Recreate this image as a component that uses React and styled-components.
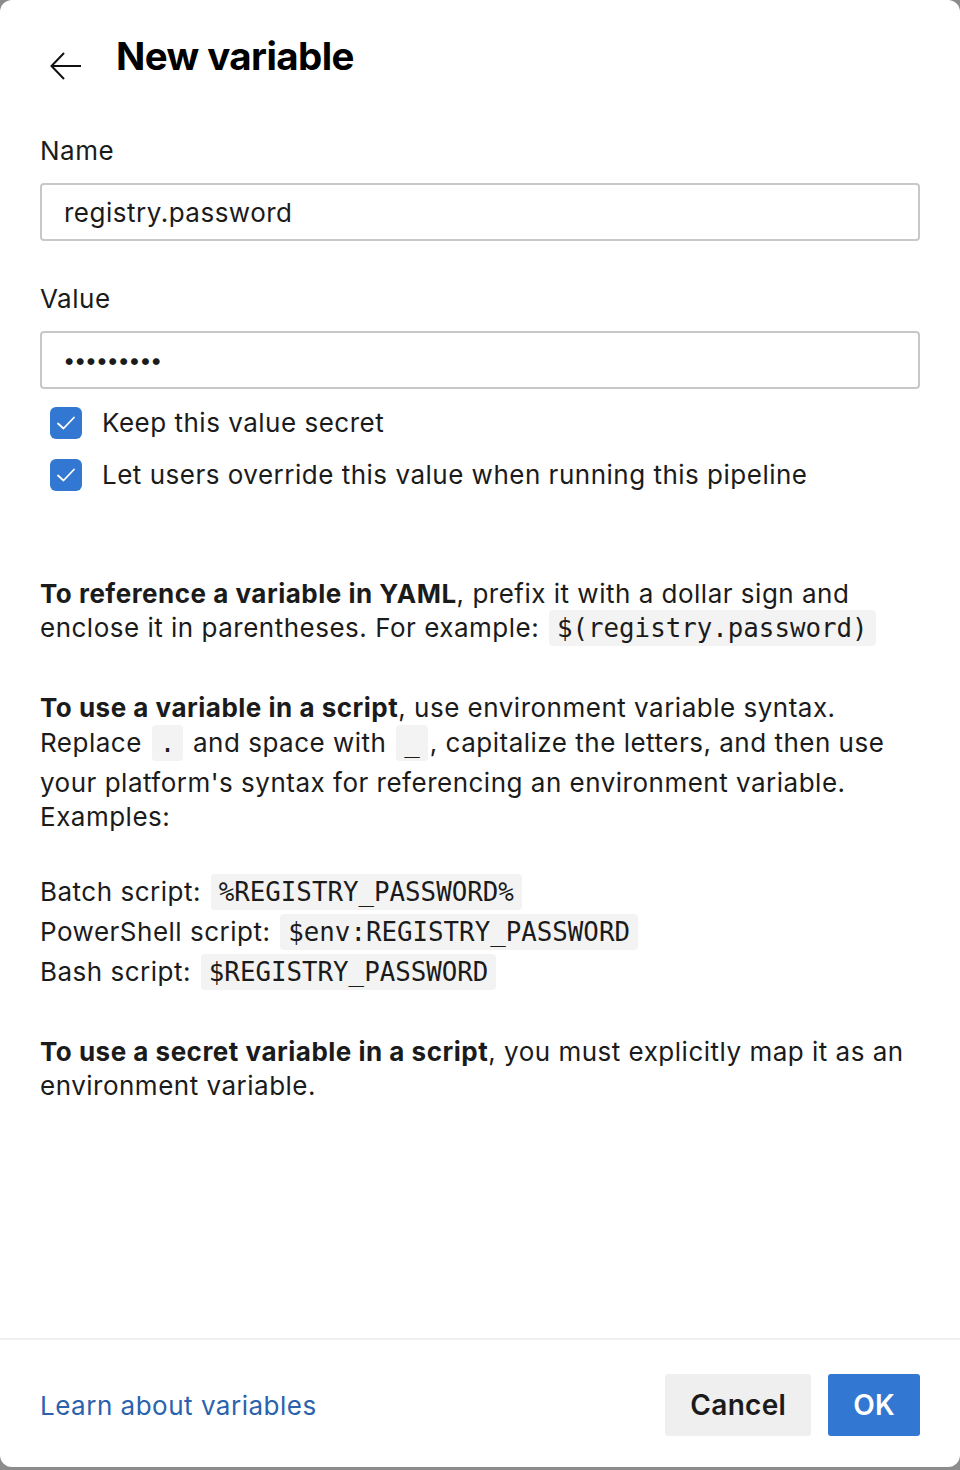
import React from "react";
import styled, { createGlobalStyle } from "styled-components";

const Global = createGlobalStyle`
  html, body { margin: 0; padding: 0; background: #8c8c8c; }
  body { font-family: Inter, "Open Sans", "Liberation Sans", sans-serif; color: #1b1b1b; letter-spacing: 0.5px; }
  * { box-sizing: border-box; }
`;

const Dialog = styled.div`
  width: 960px;
  height: 1467px;
  background: #fff;
  border-radius: 12px;
  display: flex;
  flex-direction: column;
  overflow: hidden;
`;

const Body = styled.div`
  flex: 1;
  padding: 0 40px;
  display: flex;
  flex-direction: column;
`;

const Header = styled.div`
  display: flex;
  align-items: center;
  gap: 34px;
  height: 116px;
  padding-left: 10px;
`;

const BackButton = styled.button`
  border: 0;
  background: none;
  padding: 0;
  width: 32px;
  height: 32px;
  display: flex;
  align-items: center;
  justify-content: center;
  margin-top: 16px;
  cursor: pointer;
`;

const Title = styled.h1`
  margin: 0 0 4px;
  font-size: 38.5px;
  font-weight: 700;
  letter-spacing: -0.6px;
  color: #000;
`;

const Label = styled.label`
  display: block;
  font-size: 26px;
  line-height: 34px;
  margin-top: ${(p) => p.$mt || 0}px;
  margin-bottom: 15px;
`;

const Input = styled.input`
  width: 100%;
  height: 58px;
  border: 2px solid #c8c8c8;
  border-radius: 4px;
  padding: 0 22px;
  font-family: inherit;
  font-size: 26px;
  letter-spacing: 0.5px;
  color: #1b1b1b;
  outline: none;
  background: #fff;
  ${(p) => p.type === "password" && "letter-spacing: -1.5px; font-size: 22px; padding-left: 21px;"}
`;

const Checks = styled.div`
  display: flex;
  flex-direction: column;
  gap: 20px;
  margin-top: 18px;
  padding-left: 10px;
`;

const CheckRow = styled.label`
  display: flex;
  align-items: center;
  gap: 20px;
  font-size: 26px;
  line-height: 32px;
`;

const Box = styled.span`
  width: 32px;
  height: 32px;
  border-radius: 6px;
  background: #3277d1;
  display: flex;
  align-items: center;
  justify-content: center;
  flex-shrink: 0;
`;

const Info = styled.div`
  margin-top: 86px;
  display: flex;
  flex-direction: column;
  font-size: 26px;
  line-height: 34px;
`;

const P = styled.p`
  margin: 0 0 ${(p) => p.$mb || 0}px;
  line-height: ${(p) => p.$lh || 34}px;
`;

const Code = styled.code`
  font-family: "DejaVu Sans Mono", "Liberation Mono", monospace;
  font-size: 25.8px;
  letter-spacing: 0;
  background: #f3f3f3;
  border-radius: 4px;
  padding: 3px 8px;
  margin: 0 2px;
  ${(p) =>
    p.$tall &&
    `
    display: inline-block;
    line-height: 34px;
    padding: 1px 8px;
    margin-bottom: 5px;
  `}
`;

const Footer = styled.div`
  border-top: 2px solid #efefef;
  height: 129px;
  display: flex;
  align-items: center;
  justify-content: space-between;
  padding: 0 40px;
`;

const Link = styled.a`
  color: #2b62ac;
  font-size: 26px;
  text-decoration: none;
  margin-top: 4px;
`;

const Buttons = styled.div`
  display: flex;
  gap: 17px;
  margin-top: 2px;
`;

const Button = styled.button`
  height: 62px;
  padding: 0 25px;
  border: 0;
  border-radius: 3px;
  font-family: inherit;
  font-size: 28px;
  font-weight: 600;
  letter-spacing: 0.3px;
  background: ${(p) => (p.$primary ? "#3277d1" : "#efefef")};
  color: ${(p) => (p.$primary ? "#fff" : "#1b1b1b")};
`;

const Check = () => (
  <svg width="20" height="16" viewBox="0 0 20 16" fill="none">
    <path d="M2 8.5 L7.5 13.5 L18 2.5" stroke="#fff" strokeWidth="1.8" strokeLinecap="round" strokeLinejoin="round" />
  </svg>
);

export default function App() {
  return (
    <>
      <Global />
      <Dialog>
        <Body>
          <Header>
            <BackButton aria-label="Back">
              <svg width="32" height="30" viewBox="0 0 32 30" fill="none">
                <path d="M31 15 H2 M14 2 L1.5 15 L14 28" stroke="#111" strokeWidth="2" strokeLinejoin="miter" />
              </svg>
            </BackButton>
            <Title>New variable</Title>
          </Header>

          <Label $mt={18}>Name</Label>
          <Input defaultValue="registry.password" />

          <Label $mt={41}>Value</Label>
          <Input type="password" defaultValue="password1" />

          <Checks>
            <CheckRow><Box><Check /></Box>Keep this value secret</CheckRow>
            <CheckRow><Box><Check /></Box>Let users override this value when running this pipeline</CheckRow>
          </Checks>

          <Info>
            <P $mb={46}>
              <b>To reference a variable in YAML</b>, prefix it with a dollar sign and enclose it in parentheses. For example: <Code>$(registry.password)</Code>
            </P>
            <P $mb={38}>
              <b>To use a variable in a script</b>, use environment variable syntax. Replace <Code $tall>.</Code> and space with <Code $tall>_</Code>, capitalize the letters, and then use your platform's syntax for referencing an environment variable. Examples:
            </P>
            <P $lh={40} $mb={43}>
              Batch script: <Code>%REGISTRY_PASSWORD%</Code>
              <br />
              PowerShell script: <Code>$env:REGISTRY_PASSWORD</Code>
              <br />
              Bash script: <Code>$REGISTRY_PASSWORD</Code>
            </P>
            <P>
              <b>To use a secret variable in a script</b>, you must explicitly map it as an environment variable.
            </P>
          </Info>
        </Body>
        <Footer>
          <Link href="#">Learn about variables</Link>
          <Buttons>
            <Button>Cancel</Button>
            <Button $primary>OK</Button>
          </Buttons>
        </Footer>
      </Dialog>
    </>
  );
}
